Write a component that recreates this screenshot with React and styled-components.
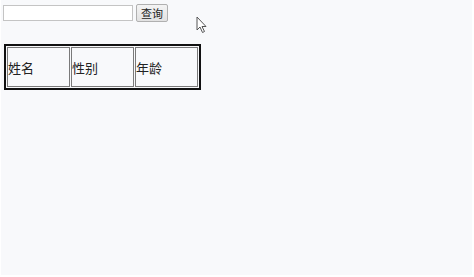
import React from "react";
import styled, { createGlobalStyle } from "styled-components";

const Global = createGlobalStyle`
  html, body {
    margin: 0;
    padding: 0;
    background: #ffffff;
  }
  body {
    font-family: "Liberation Sans", "Noto Sans CJK SC", sans-serif;
  }
`;

const Page = styled.div`
  position: relative;
  width: 471px;
  height: 275px;
  margin-left: 1px;
  background: #f8f9fb;
  padding: 4px 0 0 2px;
  box-sizing: border-box;
`;

const SearchBar = styled.div`
  display: flex;
  align-items: center;
  gap: 3px;
  height: 18px;
`;

const SearchInput = styled.input`
  width: 130px;
  height: 16px;
  box-sizing: border-box;
  border: 1px solid #c4c4c4;
  background: #fff;
  padding: 0 2px;
  margin: 0;
  font-size: 12px;
  outline: none;
`;

const SearchButton = styled.button`
  width: 32px;
  height: 18px;
  box-sizing: border-box;
  margin: 0;
  padding: 0;
  border: 1px solid #b0b0b0;
  border-radius: 2px;
  background: linear-gradient(#f4f4f4, #e2e2e2);
  color: #222;
  font-size: 11px;
  font-family: "Noto Sans CJK SC", sans-serif;
  line-height: 16px;
`;

const Table = styled.table`
  margin: 22px 0 0 1px;
  border: 2px solid #111;
  border-spacing: 1px;
  border-collapse: separate;
`;

const Cell = styled.td`
  width: 61px;
  height: 38px;
  padding: 0;
  border: 1px solid #7a7a7a;
  font-family: "Noto Sans CJK SC", sans-serif;
  font-size: 13px;
  color: #222;
  vertical-align: middle;
  text-align: left;
`;

const Pointer = styled.svg`
  position: absolute;
  left: 195px;
  top: 16px;
`;

export default function App() {
  return (
    <>
      <Global />
      <Page>
        <SearchBar>
          <SearchInput type="text" />
          <SearchButton>查询</SearchButton>
        </SearchBar>
        <Table>
          <tbody>
            <tr>
              <Cell>姓名</Cell>
              <Cell>性别</Cell>
              <Cell>年龄</Cell>
            </tr>
          </tbody>
        </Table>
        <Pointer width="12" height="18" viewBox="0 0 12 18">
          <path
            d="M1 1 L1 14 L4 11 L6.5 16.5 L8.5 15.5 L6 10.5 L10 10.5 Z"
            fill="#fff"
            stroke="#555"
            strokeWidth="1"
            strokeLinejoin="round"
          />
        </Pointer>
      </Page>
    </>
  );
}
